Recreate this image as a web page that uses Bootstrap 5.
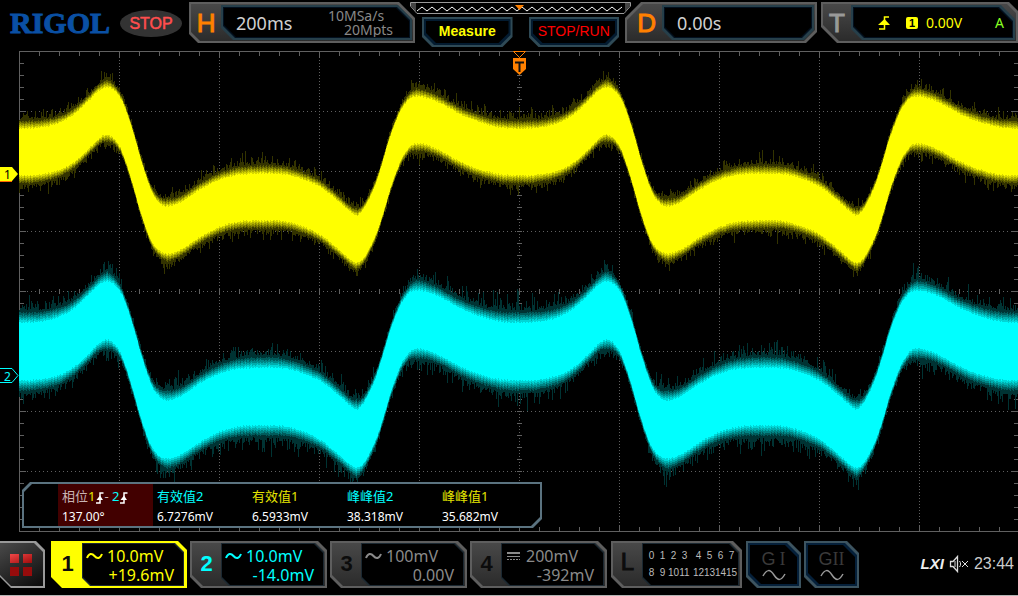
<!DOCTYPE html>
<html lang="zh-CN">
<head>
<meta charset="utf-8">
<meta name="viewport" content="width=device-width, initial-scale=1">
<title>RIGOL</title>
<link href="https://cdn.jsdelivr.net/npm/bootstrap@5.3.0/dist/css/bootstrap.min.css" rel="stylesheet">
<style>
body{background:#000;color:#ccc;font-family:"Noto Sans","Noto Sans CJK SC",sans-serif;font-size:16px;line-height:20px;overflow:hidden}
.scope{min-height:100vh;border-bottom:1px solid #b4b4b4}
.arial{font-family:"Liberation Sans",Arial,sans-serif}
/* A box with cut corners: one length for each corner. */
.cut{--tl:0px;--tr:0px;--br:0px;--bl:0px;clip-path:polygon(var(--tl) 0,calc(100% - var(--tr)) 0,100% var(--tr),100% calc(100% - var(--br)),calc(100% - var(--br)) 100%,var(--bl) 100%,0 calc(100% - var(--bl)),0 var(--tl))}
.c-h{--tr:16px;--bl:9px}.c-d{--tl:16px;--br:11px}.c-t{--tr:9px;--bl:16px}
.c-hs{--tr:13px;--bl:12px}.c-ds{--br:10px;--bl:10px}.c-ts{--tr:14px;--bl:11px}
.c-bot{--br:10px;--bl:10px}.c-ch{--tr:9px;--bl:11px}.c-chs{--tr:9px;--bl:8px}
.c-g{--tr:12px;--bl:11px}
.c-meas{--tl:8px;--br:9px}
.edge{background:#5e5e5e;padding:2px}
.face{background:linear-gradient(#484848,#2b2b2b);height:100%}
.frame{background:#263f4a;padding:2px;margin:1px 1px 1px 0}
.glow{background:#02101f;padding:1px}
.well{background:#000;height:100%}
.topbar{height:51px}
.logo{font-family:"Liberation Serif",serif;font-weight:700;font-size:30px;line-height:34px;color:#0a50a4;-webkit-text-stroke:1px #0a50a4;flex:0 0 100px;margin-left:10px;margin-top:6px}
.pill{flex:0 0 62px;margin:10px 7px 0 10px;height:27px;border-radius:50%;background:#333;color:#ff4e4e;font-size:16px;line-height:28px;-webkit-text-stroke:.5px #ff4e4e}
.p-h{flex:226 1 226px;height:41px;margin-top:2px}
.p-mid{flex:0 0 221px;margin:2px 0 0 -5px}
.p-d{flex:192 1 192px;height:41px;margin:2px 4px 0 -6px}
.p-t{flex:197 1 197px;height:41px;margin-top:2px}
.knob{font-size:26px;line-height:38px;color:#ff8000;-webkit-text-stroke:1px}
.w-h{width:30px}.w-d{width:35px;padding-left:4px}.w-t{width:28px}
.big{font-size:18px;color:#d0d0d0}
.rate{font-size:14px;line-height:14px;color:#888}
.trig{font-size:14px;color:#ff0}
.chip{background:#ff0;color:#000;font-size:11px;line-height:12px;width:12px;border-radius:2px}
.softkeys{gap:16px;padding:0 12px;margin-top:3px}
.soft{height:30px;border:0;flex:90 1 0;background:#2f4a56;padding:2px}
.soft .glow{height:100%;background:#031b30;padding:2px}
.soft .well{font-size:14px;line-height:21px}
.plot{display:block;width:100%;height:484px}
.meas{left:22px;top:431px;width:520px;height:46px;background:#5b7380;padding:2px}
.meas .well{padding-left:34px}
.meas table{border-collapse:collapse;table-layout:fixed;width:475px;font-size:12px;line-height:20px;color:#fff}
.meas th,.meas td{font-weight:400;padding:1px 4px 0;white-space:nowrap;width:95px}
.meas th{padding-top:2px}
.meas th{font-size:13px}
.meas tr>:first-child{background:#420000}
.yel{color:#ff0}.cya{color:#0ff}
.meas .yel{color:#e6e600}
.dock{height:47px;margin-top:6px}
.dock button{border:0;color:inherit;text-align:left;height:47px;min-width:0}
.dock .b-menu{flex:45 1 45px;margin-right:6px;background:#999;padding:2px 2px 2px 0}
.b-menu .face{background:linear-gradient(150deg,#4a4a4a,#0a0a0a)}
.b-ch{flex:137 1 137px;margin-right:3px}
.b-ch.first{flex:136 1 136px}
.b-l{flex:131 1 131px;margin:0 4px 0 1px}
.dock .b-g{flex:55 1 55px;margin-right:3px;background:#3d5460;padding:2px}
.b-g .glow{height:100%;background:#05203a;padding:2px}
.b-g .well{color:#3a3a3a;font-size:18px;line-height:20px;padding-top:4px}
.b-g svg{display:block;margin:0 auto}
.num{width:29px;font-size:22px;font-weight:700;line-height:42px;color:#0c0c0c}
.num.thin{font-weight:400;font-size:24px;line-height:38px;-webkit-text-stroke:1px}
.num.lit{color:#0ff}
.val{background:#1b2831;padding:1px;margin:0 1px 0 0}
.val .well{font-size:16px;line-height:19px;padding:3px 9px 0 3px}
.on.edge,.on .face{background:#ff0}
.off .well{color:#8a8a8a}
.val .well.bitwell{padding:3px 0 0 3px}
.bits{display:grid;grid-template-columns:repeat(4,11px) 3px repeat(4,11px);font-size:10px;line-height:17px;color:#bbb}
.bits span{display:flex;justify-content:center}
.tray{flex:156 1 156px;font-size:16px;padding:0 4px 0 0;margin-top:-1px}
.lxi{font-size:15px;font-weight:700;font-style:italic;color:#eee}
.iserif{font-family:"Liberation Serif",serif}
</style>
<script src="https://cdn.jsdelivr.net/npm/bootstrap@5.3.0/dist/js/bootstrap.bundle.min.js"></script>
</head>
<body>
<div class="scope d-flex flex-column">
<header class="topbar d-flex align-items-start">
  <div class="logo">RIGOL</div>
  <div class="pill arial text-center">STOP</div>
  <div class="p-h cut c-h edge"><div class="face cut c-h d-flex">
    <div class="knob arial text-center w-h">H</div>
    <div class="frame cut c-hs flex-grow-1"><div class="glow cut c-hs h-100"><div class="well cut c-hs d-flex align-items-center ps-2">
      <span class="big ps-1">200ms</span>
      <div class="rate ms-auto pe-3"><div>10MSa/s</div><div class="ps-3">20Mpts</div></div>
    </div></div></div>
  </div></div>
  <div class="p-mid">
    <svg class="d-block w-100" height="12" viewBox="0 0 221 12" preserveAspectRatio="none" fill="none">
      <path d="M.5.5H220.500V4L214 11.500H7L.5 4Z" stroke="#999"/>
      <path d="M1 1H6V10L1 4ZM220 1H215V10L220 4Z" fill="#444"/>
      <path id="zig" stroke="#fff"/>
      <path d="M105 3h9l-4.500 5z" fill="#ff8000"/>
    </svg>
    <div class="softkeys d-flex">
      <button class="soft cut c-bot"><span class="glow cut c-bot d-block"><span class="well cut c-bot d-block arial fw-bold yel">Measure</span></span></button>
      <button class="soft cut c-bot"><span class="glow cut c-bot d-block"><span class="well cut c-bot d-block arial" style="color:#f00">STOP/RUN</span></span></button>
    </div>
  </div>
  <div class="p-d cut c-d edge"><div class="face cut c-d d-flex">
    <div class="knob arial text-center w-d">D</div>
    <div class="frame cut c-ds flex-grow-1"><div class="glow cut c-ds h-100"><div class="well cut c-ds d-flex align-items-center ps-2"><span class="big ps-1">0.00s</span></div></div></div>
  </div></div>
  <div class="p-t cut c-t edge"><div class="face cut c-t d-flex">
    <div class="knob arial text-center w-t" style="color:#999">T</div>
    <div class="frame cut c-ts flex-grow-1"><div class="glow cut c-ts h-100"><div class="well cut c-ts d-flex align-items-center trig ps-4">
      <svg width="12" height="14" viewBox="0 0 12 14"><path d="M11 1H6.500V13H1" fill="none" stroke="#ff0" stroke-width="1.500"/><path d="M0 9L6.500 3L12 9Z" fill="#ff0"/></svg>
      <span class="chip arial fw-bold text-center ms-3 me-2">1</span><span class="flex-grow-1">0.00V</span><span class="pe-2" style="color:#8f2">A</span>
    </div></div></div>
  </div></div>
</header>

<main class="position-relative">
  <svg class="plot" viewBox="0 0 1018 484" preserveAspectRatio="none">
    <g id="grid" shape-rendering="crispEdges" stroke="#606060" fill="none"></g>
    <g id="traces" shape-rendering="crispEdges" fill="none"></g>
    <path d="M0 116H12L18 123L12 130H0Z" fill="#ff0"/><path d="M0 130.500H12" stroke="#f60"/>
    <text x="4" y="128" font-size="12" fill="#000">1</text>
    <path d="M0 317.500H12L18 324.500L12 331.500H0" fill="#000" stroke="#0ff"/>
    <text x="4" y="330" font-size="12" fill="#0ff">2</text>
    <path d="M513.500.5H525.500L519.500 6.500Z" fill="#000" stroke="#ff8000"/>
    <path d="M513 7H526V18L519.500 24L513 18Z" fill="#ff8000"/>
    <path d="M515 11.500H524M519.500 11.500V21" stroke="#111" stroke-width="2"/>
  </svg>
  <div class="meas cut c-meas position-absolute"><div class="well cut c-meas">
    <table>
      <tr><th style="color:#c9b5b5">相位<span class="yel">1</span><svg width="9" height="12" viewBox="0 0 9 12"><path d="M8.500 1H5V11H1" fill="none" stroke="#fff" stroke-width="1.500"/><path d="M1.500 8L5 3.500L8 8Z" fill="#fff"/></svg>- <span class="cya">2</span><svg width="9" height="12" viewBox="0 0 9 12"><path d="M8.500 1H5V11H1" fill="none" stroke="#fff" stroke-width="1.500"/><path d="M1.500 8L5 3.500L8 8Z" fill="#fff"/></svg></th>
      <th class="cya">有效值2</th><th class="yel">有效值1</th><th class="cya">峰峰值2</th><th class="yel">峰峰值1</th></tr>
      <tr><td>137.00°</td><td>6.7276mV</td><td>6.5933mV</td><td>38.318mV</td><td>35.682mV</td></tr>
    </table>
  </div></div>
</main>

<footer class="dock d-flex">
  <button class="b-menu cut c-ch" aria-label="Menu"><span class="face cut c-ch d-flex align-items-center ps-2">
    <svg width="24" height="24" viewBox="0 0 24 24"><defs><linearGradient id="rd" x1="0" y1="0" x2="1" y2="1"><stop offset="0" stop-color="#f04848"/><stop offset="1" stop-color="#a00c0c"/></linearGradient></defs><path d="M2 1h9v9H2zM15 1h9v9h-9z" fill="url(#rd)"/><path d="M2 14h9v9H2zM15 14h9v9h-9z" fill="#960c0c"/></svg></span></button>
  <button class="b-ch first on cut c-ch edge"><span class="face cut c-ch d-flex">
    <span class="num arial text-center">1</span><span class="val cut c-chs flex-grow-1"><span class="well cut c-chs d-block yel">
      <span class="d-flex align-items-center"><svg width="17" height="9" viewBox="0 0 17 9"><path d="M1 6C3 1 6 1 8.500 4S14 7 16 2" fill="none" stroke="currentColor" stroke-width="2"/></svg><span class="ps-1">10.0mV</span></span><span class="d-block text-end">+19.6mV</span></span></span></span></button>
  <button class="b-ch cut c-ch edge"><span class="face cut c-ch d-flex">
    <span class="num lit arial text-center">2</span><span class="val cut c-chs flex-grow-1"><span class="well cut c-chs d-block cya">
      <span class="d-flex align-items-center"><svg width="17" height="9" viewBox="0 0 17 9"><path d="M1 6C3 1 6 1 8.500 4S14 7 16 2" fill="none" stroke="currentColor" stroke-width="2"/></svg><span class="ps-1">10.0mV</span></span><span class="d-block text-end">-14.0mV</span></span></span></span></button>
  <button class="b-ch off cut c-ch edge"><span class="face cut c-ch d-flex">
    <span class="num arial text-center">3</span><span class="val cut c-chs flex-grow-1"><span class="well cut c-chs d-block">
      <span class="d-flex align-items-center"><svg width="17" height="9" viewBox="0 0 17 9"><path d="M1 6C3 1 6 1 8.500 4S14 7 16 2" fill="none" stroke="currentColor" stroke-width="2"/></svg><span class="ps-1">100mV</span></span><span class="d-block text-end">0.00V</span></span></span></span></button>
  <button class="b-ch off cut c-ch edge"><span class="face cut c-ch d-flex">
    <span class="num arial text-center">4</span><span class="val cut c-chs flex-grow-1"><span class="well cut c-chs d-block">
      <span class="d-flex align-items-center"><svg width="17" height="9" viewBox="0 0 17 9" shape-rendering="crispEdges" stroke="currentColor"><path d="M2 1H15" stroke-width="2"/><path d="M2 4.500H15"/><path d="M2 7.500H15" stroke-dasharray="2 1"/></svg><span class="ps-1">200mV</span></span><span class="d-block text-end">-392mV</span></span></span></span></button>
  <button class="b-l cut c-ch edge"><span class="face cut c-ch d-flex">
    <span class="num thin arial text-center">L</span><span class="val cut c-chs flex-grow-1"><span class="well bitwell cut c-chs d-block">
      <span class="bits arial"><span>0</span><span>1</span><span>2</span><span>3</span><i></i><span>4</span><span>5</span><span>6</span><span>7</span><span>8</span><span>9</span><span>10</span><span>11</span><i></i><span>12</span><span>13</span><span>14</span><span>15</span></span></span></span></span></button>
  <button class="b-g cut c-g"><span class="glow cut c-g d-block"><span class="well cut c-g d-block text-center arial">G<span class="iserif ps-1">I</span>
    <svg width="24" height="12" viewBox="0 0 24 12"><path d="M1 7C5 0 8 0 12 6S19 12 23 5" fill="none" stroke="#999" stroke-width="1.500"/></svg></span></span></button>
  <button class="b-g cut c-g"><span class="glow cut c-g d-block"><span class="well cut c-g d-block text-center arial">G<span class="iserif">II</span>
    <svg width="24" height="12" viewBox="0 0 24 12"><path d="M1 7C5 0 8 0 12 6S19 12 23 5" fill="none" stroke="#999" stroke-width="1.500"/></svg></span></span></button>
  <div class="tray arial d-flex align-items-center justify-content-end">
    <span class="lxi pe-1">LXI</span>
    <svg class="me-1" width="22" height="18" viewBox="0 0 22 18" fill="none" stroke="#ddd"><path d="M2.500 6.500H5L9.500 1.500V16.500L5 11.500H2.500Z" stroke-width="1.300"/><path d="M7 6V12M11.500 6C13 8 13 10 11.500 12M14 6L20 12M20 6L14 12"/></svg>
    <span>23:44</span>
  </div>
</footer>
</div>
<script>
const byId = id => document.getElementById(id);

// Memory bar zigzag
let z = 'M7 9';
for (let x = 12, up = true; x <= 214; x += 5, up = !up) z += `L${x} ${up ? 5 : 9}`;
byId('zig').setAttribute('d', z);

// Graticule: 100 x 60 divisions, ticks at every fifth
let solid = 'M19.5 480.5V.5H1018M19.5 480.5H1018', dots = '', dotsV = '';
for (let x = 39; x < 1018; x += 20) {
  const n = (x - 19) % 100 ? 4 : 6;
  solid += `M${x}.5 1v${n}M${x}.5 480v-${n}M${x}.5 238v5`;
}
for (let y = 12; y < 480; y += 12) {
  const n = y % 60 ? 4 : 6;
  solid += `M20 ${y}.5h${n}M1018 ${y}.5h-${n}M517 ${y}.5h5`;
}
for (let x = 119; x < 1018; x += 100) dotsV += `M${x}.5 0V480`;
for (let y = 60; y < 480; y += 60) dots += `M19 ${y}.5H1018`;
byId('grid').innerHTML = `<path d="${dots}" stroke-dasharray="1 3"/><path d="${dotsV}" stroke-dasharray="1 2"/><path d="${solid}"/>`;

// One period of the wave (x, centre y in px), repeated every 500 px
const wave = [[19,101],[35,100.5],[50,98],[62,94],[75,86],[90,72],[98,64],[106,60],[113,63],[120,72],[125,84],[130,99],[135,116],[140,134],[150,163],[157,174],[166,179],[180,175],[200,162],[220,152],[240,147],[270,146],[285,147],[300,151],[320,160],[340,176],[349,184],[356,188],[361,185],[366,178],[375,159],[382,138],[390,111],[400,85],[405,77],[410,71],[417,69],[428,71],[440,76],[460,87],[480,95],[500,100],[519,101]];
function centre(x) {
  x = 19 + (x - 19 + 500) % 500;
  let i = 0;
  while (i < wave.length - 2 && wave[i + 1][0] <= x) i++;
  const m = k => k <= 0 || k >= wave.length - 1 ? 0 : (wave[k+1][1] - wave[k-1][1]) / (wave[k+1][0] - wave[k-1][0]);
  const [x0, y0] = wave[i], [x1, y1] = wave[i + 1], h = x1 - x0, t = (x - x0) / h;
  return y0*(1+2*t)*(1-t)*(1-t) + m(i)*h*t*(1-t)*(1-t) + y1*t*t*(3-2*t) + m(i+1)*h*t*t*(t-1);
}
let seed = 7;
const rnd = () => (seed = (seed * 16807) % 2147483647) / 2147483647;
const spike = () => -Math.log(1 - rnd() * .985);
function trace(offset, half, soft, rgb) {
  const levels = [.2, .36, .52, .68, .84, 1], d = levels.map(() => '');
  for (let x = 19; x < 1018; x++) {
    const c = centre(x) + offset, slope = Math.abs(centre(x + 1) - centre(x - 1)) / 2;
    const f = 1 / (1 + slope * .45), core = half - soft / 2 + slope;
    const a = spike(), b = spike(), j = (x % 3) * .6 + rnd();
    levels.forEach((v, k) => {
      const s = k ? (soft * (1 - k / 5) + j) * f : 0;
      const up = k ? s : (soft + 1 + a * soft * .42) * f, dn = k ? s : (soft + 1 + b * soft * .4) * f;
      d[k] += `M${x}.5 ${Math.round(c - core - up)}V${Math.round(c + core + dn)}`;
    });
  }
  return levels.map((v, k) => `<path d="${d[k]}" stroke="rgb(${rgb.map(n => Math.round(n * v))})"/>`).join('');
}
byId('traces').innerHTML = trace(0, 27, 9, [255, 255, 0]) + trace(199.5, 34, 12, [0, 255, 255]);
</script>
</body>
</html>
